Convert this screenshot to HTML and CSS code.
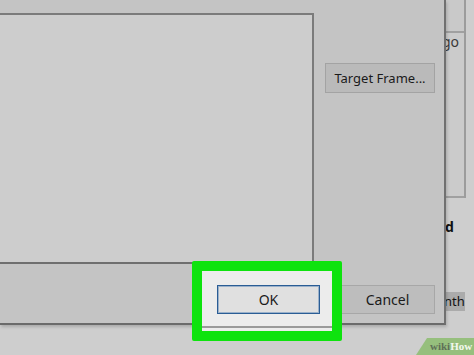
FILE: index.html
```html
<!DOCTYPE html>
<html>
<head>
<meta charset="utf-8">
<link rel="stylesheet" href="styles.css">
</head>
<body>
<div class="screen">
  <div class="dialog">
    <div class="main-row">
      <div class="panel"></div>
      <div class="side-col">
        <button class="btn btn-target">Target Frame...</button>
      </div>
    </div>
    <div class="button-row">
      <div class="ok-wrap">
        <button class="btn btn-ok">OK</button>
      </div>
      <button class="btn btn-cancel">Cancel</button>
    </div>
  </div>
  <div class="behind">
    <div class="behind-frame">
      <div class="frame-top"></div>
      <div class="frame-body"><span class="clip-text go">go</span></div>
    </div>
    <span class="clip-text d">d</span>
    <span class="clip-text nth">nth</span>
  </div>
</div>
<div class="watermark"><span class="wm-wiki">wiki</span><span class="wm-how">How</span></div>
</body>
</html>
```
FILE: styles.css
```css
* { box-sizing: border-box; }
html, body {
  margin: 0;
  padding: 0;
  width: 474px;
  height: 355px;
  overflow: hidden;
  background: #cecece;
  font-family: "Noto Sans", "Open Sans", sans-serif;
}
.screen {
  display: flex;
  align-items: flex-start;
  width: 474px;
  height: 355px;
  position: relative;
}
.dialog {
  flex: none;
  width: 446px;
  height: 325px;
  background: #c4c4c4;
  border-right: 2px solid #707070;
  border-bottom: 2px solid #6a6a6a;
  box-shadow: 1px 2px 3px rgba(0,0,0,0.18);
  padding-top: 13px;
  display: flex;
  flex-direction: column;
  position: relative;
  z-index: 2;
}
.main-row {
  display: flex;
  height: 251px;
}
.panel {
  width: 314px;
  height: 251px;
  background: #cdcdcd;
  border-top: 2px solid #7b7b7b;
  border-right: 2px solid #7b7b7b;
  border-bottom: 2px solid #6f6f6f;
}
.side-col {
  padding-top: 50px;
  padding-left: 11px;
}
.btn {
  font-family: "Noto Sans", "Open Sans", sans-serif;
  color: #1a1a1a;
  padding: 0;
  margin: 0;
  display: flex;
  align-items: center;
  justify-content: center;
}
.btn-target {
  width: 110px;
  height: 30px;
  font-size: 13px;
  background: #bababa;
  border: 1px solid #a3a3a3;
}
.button-row {
  display: flex;
  justify-content: flex-end;
  gap: 20px;
  padding-top: 21px;
  padding-right: 9px;
}
.ok-wrap {
  position: relative;
  width: 103px;
  height: 29px;
}
.ok-wrap::before {
  content: "";
  position: absolute;
  left: -25px;
  right: -22px;
  top: -24px;
  bottom: -27px;
  border: 10px solid #0ee30e;
  border-radius: 2px;
  background:
    linear-gradient(#9a9a9a, #9a9a9a) left bottom 3px / 100% 2px no-repeat,
    #ececec;
  z-index: 0;
}
.btn-ok {
  position: relative;
  z-index: 1;
  width: 103px;
  height: 29px;
  font-size: 14px;
  background: #e0e0e0;
  border: 1px solid #2a5d95;
  box-shadow: inset 0 0 0 1px rgba(70,120,175,0.45);
}
.btn-cancel {
  width: 95px;
  height: 29px;
  font-size: 14px;
  background: #bdbdbd;
  border: 1px solid #a7a7a7;
}
.behind {
  flex: none;
  width: 28px;
  height: 355px;
  display: flex;
  flex-direction: column;
}
.behind-frame {
  width: 20px;
  border-right: 2px solid #9c9c9c;
  background: #c9c9c9;
}
.frame-top {
  height: 33px;
  border-bottom: 2px solid #a0a0a0;
}
.frame-body {
  height: 165px;
  border-bottom: 2px solid #a0a0a0;
  background: #cbcbcb;
  padding-top: 1px;
}
.clip-text {
  display: block;
  font-size: 14px;
  line-height: 16px;
  color: #2a2a2a;
}
.go {
  margin-left: -4px;
  color: #3a3a3a;
}
.d {
  margin-top: 21px;
  margin-left: -1px;
  font-weight: bold;
  color: #111;
}
.nth {
  margin-top: 57px;
  width: 22px;
  height: 19px;
  font-size: 13px;
  line-height: 19px;
  background: #ababab;
  margin-left: -3px;
  padding-left: 1px;
  color: #111;
  white-space: nowrap;
}
.watermark {
  position: absolute;
  right: 0;
  bottom: 0;
  width: 58px;
  height: 17px;
  background: rgba(140,188,110,0.85);
  clip-path: polygon(11px 0, 100% 0, 100% 100%, 0 100%);
  font-family: "Liberation Serif", "DejaVu Serif", serif;
  font-weight: bold;
  font-size: 11px;
  line-height: 17px;
  padding-left: 14px;
  white-space: nowrap;
  z-index: 5;
}
.wm-wiki { color: #5f6f57; }
.wm-how { color: #f3f8ee; }
```
